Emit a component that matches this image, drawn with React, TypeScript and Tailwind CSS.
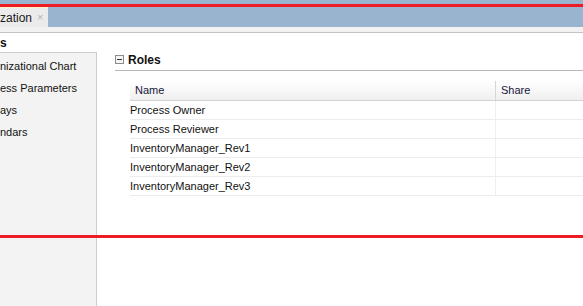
const navItems = ["nizational Chart", "ess Parameters", "ays", "ndars"];
const roles = [
  "Process Owner",
  "Process Reviewer",
  "InventoryManager_Rev1",
  "InventoryManager_Rev2",
  "InventoryManager_Rev3",
];

export default function App() {
  return (
    <div className="relative h-[306px] w-[583px] overflow-hidden bg-white font-['Liberation_Sans',Arial,sans-serif] text-[11px] text-[#111]">
      {/* tab bar */}
      <div className="flex h-[27px] items-end bg-[#99b4cf]">
        <div className="flex h-[20px] w-[48px] items-center border-t border-[#fff3c4] bg-[#ebebeb]">
          <span className="text-[12px] leading-none text-[#1a1a1a]">zation</span>
          <span className="ml-[5px] text-[11px] leading-none text-[#b5b5b5]">×</span>
        </div>
      </div>
      <div className="h-[6px] border-b border-[#c3c3c3] bg-[#f2f2f2]" />

      <div className="flex h-[273px]">
        {/* left column */}
        <div className="flex w-[97px] shrink-0 flex-col">
          <div className="flex h-[19px] shrink-0 items-center pt-[1px]">
            <span className="text-[12px] font-bold leading-none">s</span>
          </div>
          <div className="flex flex-1 flex-col border-r border-t border-[#cdcdcd] bg-[#f3f3f3] pt-[2px]">
            {navItems.map((item) => (
              <div key={item} className="flex h-[22px] items-center whitespace-nowrap text-[11px]">
                {item}
              </div>
            ))}
          </div>
        </div>

        {/* content */}
        <div className="flex flex-1 flex-col pl-[18px] pt-[18px]">
          <div className="flex h-[17px] items-center gap-[4px]">
            <div className="flex h-[9px] w-[9px] items-center justify-center border border-[#8c8c8c] bg-[#f4f4f4]">
              <div className="h-px w-[5px] bg-[#333]" />
            </div>
            <span className="text-[12px] font-bold leading-none">Roles</span>
          </div>
          <div className="mt-[2px] h-px w-full bg-[#b7b7b7]" />

          <div className="ml-[15px] mt-[10px]">
            <div className="flex h-[20px] border-b border-[#d3d3d3] bg-gradient-to-b from-white to-[#efefef]">
              <div className="flex w-[365px] items-center pl-[5px] text-[#15153a]">Name</div>
              <div className="flex flex-1 items-center border-l border-[#d6d6d6] pl-[5px] text-[#15153a]">Share</div>
            </div>
            {roles.map((role) => (
              <div key={role} className="flex h-[19px] border-b border-[#ececec]">
                <div className="flex w-[365px] items-center">{role}</div>
                <div className="flex-1 border-l border-[#efefef]" />
              </div>
            ))}
          </div>
        </div>
      </div>

      {/* annotation lines */}
      <div className="absolute left-0 top-[4px] h-[3px] w-full bg-[#ed1c24]" />
      <div className="absolute left-0 top-[235px] h-[3px] w-full bg-[#ed1c24]" />
    </div>
  );
}
